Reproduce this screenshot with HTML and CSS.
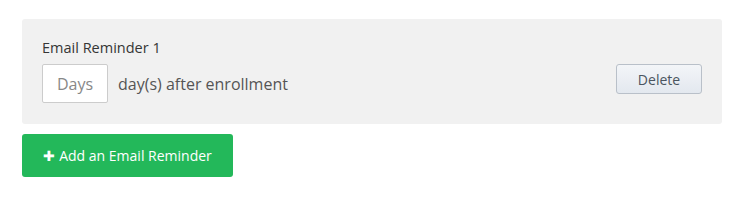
FILE: index.html
```html
<!DOCTYPE html>
<html lang="en">
<head>
  <meta charset="UTF-8">
  <title>Email Reminders</title>
  <link rel="stylesheet" href="styles.css">
</head>
<body>
  <div class="reminder">
    <div class="reminder-body">
      <label class="reminder-label">Email Reminder 1</label>
      <div class="reminder-row">
        <input class="days-input" type="text" placeholder="Days">
        <span class="days-text">day(s) after enrollment</span>
      </div>
    </div>
    <button class="delete-btn">Delete</button>
  </div>
  <button class="add-btn"><span class="plus">&#10010;</span>Add an Email Reminder</button>
</body>
</html>
```
FILE: styles.css
```css
body {
  margin: 0;
  padding: 19px 23px 0 22px;
  font-family: "Open Sans", sans-serif;
  background: #fff;
  color: #555;
}
.reminder {
  display: flex;
  justify-content: space-between;
  align-items: flex-end;
  background: #f1f1f1;
  border-radius: 3px;
  padding: 19px 20px 21px 20px;
}
.reminder-label {
  display: block;
  font-size: 14.5px;
  font-weight: 400;
  color: #353535;
  line-height: 19px;
  margin-bottom: 7px;
}
.reminder-row {
  display: flex;
  align-items: center;
  gap: 10px;
}
.days-input {
  box-sizing: border-box;
  width: 66px;
  height: 39px;
  border: 1px solid #ccc;
  border-radius: 2px;
  background: #fff;
  font-family: "Open Sans", sans-serif;
  font-size: 16px;
  text-align: center;
  padding: 0;
}
.days-input::placeholder {
  color: #888;
}
.days-text {
  font-size: 16px;
  color: #555;
}
.delete-btn {
  box-sizing: border-box;
  width: 86px;
  height: 30px;
  margin-bottom: 9px;
  border: 1px solid #b9c0c9;
  border-radius: 3px;
  background: linear-gradient(#f3f5f8, #e3e8ef);
  font-family: "Open Sans", sans-serif;
  font-size: 14px;
  color: #4a5560;
  cursor: pointer;
}
.add-btn {
  box-sizing: border-box;
  margin-top: 10px;
  width: 211px;
  height: 43px;
  border: none;
  border-radius: 3px;
  background: #23b85a;
  color: #fff;
  font-family: "Open Sans", sans-serif;
  font-size: 14px;
  cursor: pointer;
  padding: 0;
}
.plus {
  font-size: 14px;
  margin-right: 4px;
}
```
